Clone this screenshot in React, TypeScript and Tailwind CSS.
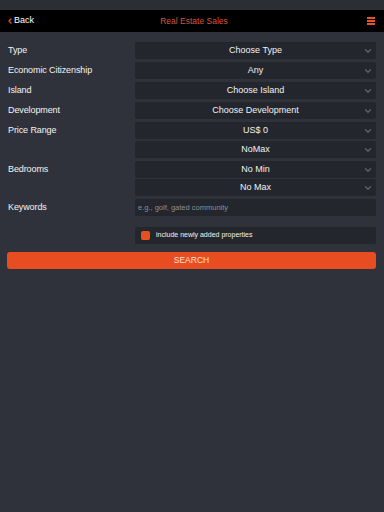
import { ChevronLeft, ChevronDown } from "lucide-react";

const font = { fontFamily: '"Liberation Sans", Arial, sans-serif' };

function Select({ value }: { value: string }) {
  return (
    <div className="relative h-[17px] bg-[#23262d] rounded-[2px] flex items-center justify-center text-[9px] text-[#f2f2f2]">
      <span>{value}</span>
      <ChevronDown className="absolute right-[3px] top-[4px] w-[10px] h-[10px] text-[#5f636c]" strokeWidth={3} />
    </div>
  );
}

function Row({ label, children }: { label: string; children: React.ReactNode }) {
  return (
    <div className="grid grid-cols-[135px_1fr] items-start">
      <div className="h-[17px] flex items-center pl-[8px] text-[9px] text-[#f4f4f4] tracking-[-0.1px]">{label}</div>
      <div className="flex flex-col gap-[1px]">{children}</div>
    </div>
  );
}

export default function App() {
  return (
    <div className="w-[384px] h-[512px] bg-[#2f323a] overflow-hidden" style={font}>
      <div className="h-[10px] bg-[#2b2e35]" />
      {/* header */}
      <div className="h-[22px] bg-black flex items-center justify-between px-[6px]">
        <div className="flex items-center w-[60px] text-[9px] text-white">
          <ChevronLeft className="w-[8px] h-[8px] text-[#e8542a]" strokeWidth={4} />
          <span>Back</span>
        </div>
        <div className="text-[8.5px] text-[#d6563c] pl-[4px]">Real Estate Sales</div>
        <div className="w-[60px] flex justify-end pr-[3px]">
          <div className="flex flex-col gap-[1px]">
            <div className="w-[8px] h-[2px] bg-[#e8542a]" />
            <div className="w-[8px] h-[2px] bg-[#e8542a]" />
            <div className="w-[8px] h-[2px] bg-[#e8542a]" />
          </div>
        </div>
      </div>

      <div className="pt-[10px] pr-[8px] flex flex-col gap-[3px]">
        <Row label="Type"><Select value="Choose Type" /></Row>
        <Row label="Economic Citizenship"><Select value="Any" /></Row>
        <Row label="Island"><Select value="Choose Island" /></Row>
        <Row label="Development"><Select value="Choose Development" /></Row>
        <Row label="Price Range">
          <div className="flex flex-col gap-[2px]">
            <Select value="US$ 0" />
            <Select value="NoMax" />
          </div>
        </Row>
        <Row label="Bedrooms">
          <Select value="No Min" />
          <Select value="No Max" />
        </Row>
        <Row label="Keywords">
          <div className="h-[17px] bg-[#23262d] rounded-[2px] flex items-center pl-[3px] text-[7.5px] text-[#8a8e96]">
            e.g., golf, gated community
          </div>
        </Row>
        <div className="grid grid-cols-[135px_1fr] mt-[8px]">
          <div />
          <div className="h-[17px] bg-[#23262d] rounded-[2px] flex items-center pl-[6px] gap-[6px] text-[7px] text-[#f2f2f2]">
            <div className="w-[9px] h-[9px] bg-[#e8501e] rounded-[2px]" />
            <span>include newly added properties</span>
          </div>
        </div>
        <div className="ml-[7px] mt-[5px] h-[17px] bg-[#e84d22] rounded-[3px] flex items-center justify-center text-[8.5px] text-[#fde0d4]">
          SEARCH
        </div>
      </div>
    </div>
  );
}
